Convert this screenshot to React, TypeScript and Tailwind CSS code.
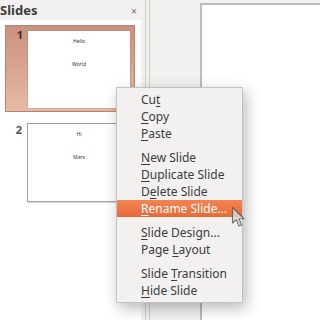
import React from "react";

type Item = { pre: string; key: string; post: string; active?: boolean };

const groups: Item[][] = [
  [
    { pre: "Cu", key: "t", post: "" },
    { pre: "", key: "C", post: "opy" },
    { pre: "", key: "P", post: "aste" },
  ],
  [
    { pre: "", key: "N", post: "ew Slide" },
    { pre: "", key: "D", post: "uplicate Slide" },
    { pre: "D", key: "e", post: "lete Slide" },
    { pre: "", key: "R", post: "ename Slide...", active: true },
  ],
  [
    { pre: "", key: "S", post: "lide Design..." },
    { pre: "Page ", key: "L", post: "ayout" },
  ],
  [
    { pre: "Slide ", key: "T", post: "ransition" },
    { pre: "", key: "H", post: "ide Slide" },
  ],
];

function Thumb({ top, bottom }: { top: string; bottom: string }) {
  return (
    <div className="w-full h-full bg-white flex flex-col items-center pt-[7px] gap-[17px] text-[5px] leading-[6px] text-[#333]">
      <span>{top}</span>
      <span>{bottom}</span>
    </div>
  );
}

export default function App() {
  return (
    <div
      className="relative w-[320px] h-[320px] overflow-hidden bg-[#f2f1f0] flex text-[#3c3c3c]"
      style={{ fontFamily: '"Noto Sans", "DejaVu Sans", sans-serif' }}
    >
      {/* Slides pane */}
      <div className="w-[141px] flex flex-col">
        <div className="h-[20px] flex items-center justify-between pr-[4px]">
          <span className="text-[13px] font-bold leading-none text-[#3c3c3c]">Slides</span>
          <span className="text-[11px] leading-none text-[#777]">×</span>
        </div>
        <div className="flex-1 bg-white flex flex-col pt-[5px]">
          <div className="ml-[5px] w-[130px] h-[87px] border border-[#b88272] bg-gradient-to-b from-[#c9927f] to-[#e7b9a5] flex">
            <div className="w-[22px] text-right pr-[5px] pt-[3px] text-[11px] font-bold leading-[12px] text-[#333]">1</div>
            <div className="mt-[5px] w-[102px] h-[77px] shadow-[0_0_1px_rgba(0,0,0,0.4)]">
              <Thumb top="Hello" bottom="World" />
            </div>
          </div>
          <div className="flex mt-[11px] ml-[5px]">
            <div className="w-[22px] text-right pr-[5px] pt-[1px] text-[11px] font-bold leading-[12px] text-[#555]">2</div>
            <div className="w-[104px] h-[79px] border border-[#a0a0a0] shadow-[1px_1px_1px_rgba(0,0,0,0.15)]">
              <Thumb top="Hi" bottom="Mars" />
            </div>
          </div>
        </div>
      </div>

      {/* splitter */}
      <div className="w-[4px]" />
      <div className="w-px bg-[#cfcdca]" />
      <div className="w-[3px]" />
      <div className="w-px bg-[#cfcdca]" />

      {/* Main edit area */}
      <div className="flex-1 pl-[50px] pt-[3px]">
        <div className="w-full h-full bg-white border-l-2 border-t-2 border-[#bdbbb8]" />
      </div>

      {/* Context menu */}
      <div className="absolute left-[116px] top-[87px] w-[127px] bg-[#f2f1f0] border border-[#c4c2bf] py-[3px] shadow-[3px_5px_14px_rgba(0,0,0,0.28)] text-[12px]">
        {groups.map((g, gi) => (
          <div key={gi} className={gi > 0 ? "pt-[7px]" : ""}>
            {g.map((it) => (
              <div
                key={it.pre + it.key + it.post}
                className={
                  it.active
                    ? "h-[17px] pl-[24px] flex items-center bg-gradient-to-b from-[#f28454] to-[#e86a36] text-white"
                    : "h-[17px] pl-[24px] flex items-center"
                }
              >
                <span className="leading-none whitespace-nowrap">
                  {it.pre}
                  <span className="underline underline-offset-2">{it.key}</span>
                  {it.post}
                </span>
              </div>
            ))}
          </div>
        ))}
      </div>

      {/* mouse pointer */}
      <svg className="absolute left-[230px] top-[206px]" width="18" height="24" viewBox="0 0 18 24">
        <path
          d="M2.5 1.5 L2.5 17 L6.3 13.6 L9 20 L11.6 18.9 L9 12.7 L14 12.7 Z"
          fill="#d8d8d8"
          stroke="#5a5a5a"
          strokeWidth="1.1"
          strokeLinejoin="round"
          opacity="0.85"
        />
      </svg>
    </div>
  );
}
